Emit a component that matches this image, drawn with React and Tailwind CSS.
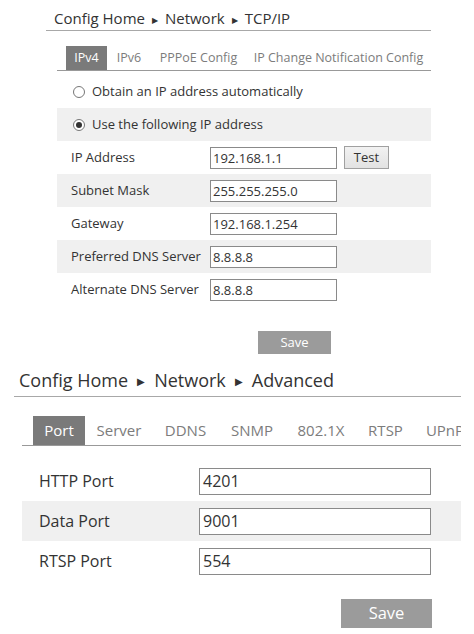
import React from 'react';

const font = { fontFamily: '"Open Sans", "Noto Sans", sans-serif' };

const Crumb = ({ items, gap }) => (
  <div>
    {items.map((t, i) => (
      <React.Fragment key={t}>
        {i > 0 && <span className={`${gap} text-[0.55em] align-[0.18em]`}>▶</span>}
        <span>{t}</span>
      </React.Fragment>
    ))}
  </div>
);

const Radio = ({ checked }) => (
  <span className="w-[12px] h-[12px] rounded-full border border-[#777] bg-white flex items-center justify-center shrink-0">
    {checked && <span className="w-[6px] h-[6px] rounded-full bg-[#333]" />}
  </span>
);

const ipRows = [
  { label: 'IP Address', value: '192.168.1.1', test: true },
  { label: 'Subnet Mask', value: '255.255.255.0', gray: true },
  { label: 'Gateway', value: '192.168.1.254' },
  { label: 'Preferred DNS Server', value: '8.8.8.8', gray: true },
  { label: 'Alternate DNS Server', value: '8.8.8.8' },
];

const ipTabs = [
  { name: 'IPv4', w: 'w-[41px]', active: true },
  { name: 'IPv6', w: 'w-[44px]' },
  { name: 'PPPoE Config', w: 'w-[95px]' },
  { name: 'IP Change Notification Config', w: 'w-[185px]' },
];

const portTabs = [
  { name: 'Port', w: 'w-[52px]', active: true },
  { name: 'Server', w: 'w-[68px]' },
  { name: 'DDNS', w: 'w-[65px]' },
  { name: 'SNMP', w: 'w-[68px]' },
  { name: '802.1X', w: 'w-[70px]' },
  { name: 'RTSP', w: 'w-[59px]' },
  { name: 'UPnP', w: 'w-[60px]' },
];

const portRows = [
  { label: 'HTTP Port', value: '4201' },
  { label: 'Data Port', value: '9001', gray: true },
  { label: 'RTSP Port', value: '554' },
];

export default function App() {
  return (
    <div className="w-[474px] h-[634px] bg-white text-[#333] overflow-hidden" style={font}>
      {/* TCP/IP */}
      <div className="ml-[46px] w-[385px] pt-[7px]">
        <div className="border-b border-[#a8a8a8] pl-[8px] h-[24px] leading-[22px] text-[15px]">
          <Crumb items={['Config Home', 'Network', 'TCP/IP']} gap="mx-[7px]" />
        </div>
        <div className="ml-[11px] mt-[15px]">
          <div className="flex border-b border-[#999] pl-[9px] text-[12.5px]">
            {ipTabs.map((t) => (
              <div
                key={t.name}
                className={`${t.w} h-[24px] shrink-0 whitespace-nowrap flex items-center justify-center ${t.active ? 'bg-[#7a7a7a] text-white' : 'text-[#7c7c7c]'}`}
              >
                {t.name}
              </div>
            ))}
          </div>
          <div className="pt-[4px] text-[13px]">
            <div className="h-[33px] flex items-center gap-[7px] pl-[16px]">
              <Radio />
              <span>Obtain an IP address automatically</span>
            </div>
            <div className="h-[33px] flex items-center gap-[7px] pl-[16px] bg-[#f0f0f0]">
              <Radio checked />
              <span>Use the following IP address</span>
            </div>
            {ipRows.map((r) => (
              <div key={r.label} className={`h-[33px] flex items-center pl-[14px] ${r.gray ? 'bg-[#f0f0f0]' : ''}`}>
                <span className="w-[139px] shrink-0 whitespace-nowrap">{r.label}</span>
                <div className="w-[127px] h-[22px] border border-[#8a8a8a] bg-white pl-[2px] leading-[20px]">{r.value}</div>
                {r.test && (
                  <div className="ml-[7px] w-[45px] h-[23px] border border-[#a0a0a0] bg-gradient-to-b from-[#f2f2f2] to-[#e2e2e2] flex items-center justify-center">
                    Test
                  </div>
                )}
              </div>
            ))}
          </div>
          <div className="flex pl-[201px] mt-[25px]">
            <div className="w-[73px] h-[23px] bg-[#9b9b9b] text-white text-[13px] flex items-center justify-center">Save</div>
          </div>
        </div>
      </div>

      {/* Advanced */}
      <div className="ml-[14px] w-[447px] mt-[12px]">
        <div className="border-b border-[#a8a8a8] pl-[5px] h-[31px] leading-[28px] text-[18px]">
          <Crumb items={['Config Home', 'Network', 'Advanced']} gap="mx-[9px]" />
        </div>
        <div className="ml-[8px] mt-[19px]">
          <div className="flex border-b border-[#999] pl-[11px] text-[15px] overflow-hidden">
            {portTabs.map((t) => (
              <div
                key={t.name}
                className={`${t.w} h-[29px] shrink-0 whitespace-nowrap flex items-center justify-center ${t.active ? 'bg-[#7a7a7a] text-white' : 'text-[#7c7c7c]'}`}
              >
                {t.name}
              </div>
            ))}
          </div>
          <div className="pt-[15px] text-[16px]">
            {portRows.map((r) => (
              <div key={r.label} className={`h-[40px] flex items-center pl-[17px] ${r.gray ? 'bg-[#f0f0f0]' : ''}`}>
                <span className="w-[160px] shrink-0">{r.label}</span>
                <div className="w-[232px] h-[27px] border border-[#8a8a8a] bg-white pl-[3px] leading-[25px]">{r.value}</div>
              </div>
            ))}
          </div>
          <div className="flex pl-[319px] mt-[18px]">
            <div className="w-[91px] h-[29px] bg-[#9b9b9b] text-white text-[16.5px] flex items-center justify-center">Save</div>
          </div>
        </div>
      </div>
    </div>
  );
}
